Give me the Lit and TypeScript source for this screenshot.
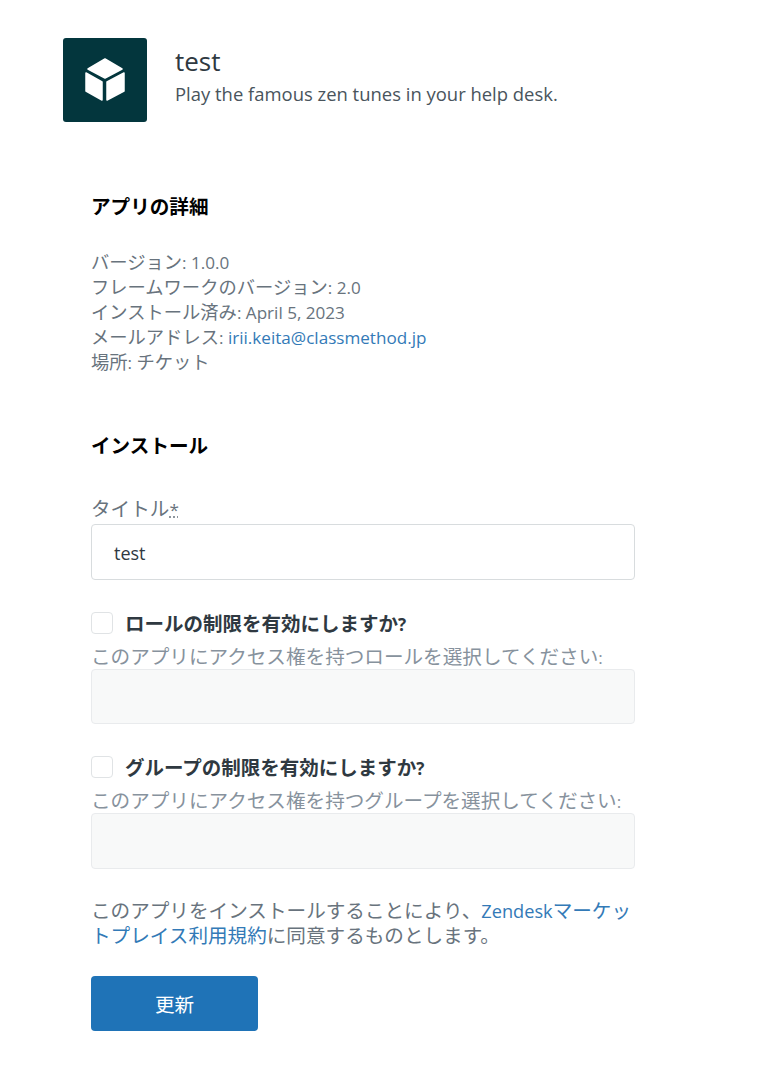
import { css, html, LitElement } from "lit";
import { customElement } from "lit/decorators.js";

@customElement("app-root")
export class AppRoot extends LitElement {
  static styles = css`
    :host {
      display: block;
      width: 768px;
      height: 1090px;
      background: #fff;
      color: #49545c;
      font-family: "Noto Sans CJK JP", "Open Sans", sans-serif;
      font-size: 19.6px;
      line-height: 25px;
      overflow: hidden;
    }
    a {
      color: #337ab7;
      text-decoration: none;
    }
    .lt {
      font-family: "Open Sans", sans-serif;
      font-size: 17.1px;
      line-height: 1;
    }
    .brand {
      font-size: 18.2px;
    }
    .header {
      display: flex;
      gap: 28px;
      padding: 38px 0 0 63px;
    }
    .icon {
      width: 84px;
      height: 84px;
      border-radius: 3px;
      background: #03363d;
      display: flex;
      align-items: center;
      justify-content: center;
    }
    .name {
      font-family: "Open Sans", sans-serif;
      font-size: 26px;
      line-height: 34px;
      margin-top: 6px;
      color: #2f3941;
    }
    .tagline {
      font-family: "Open Sans", sans-serif;
      font-size: 18.45px;
      line-height: 25px;
      margin-top: 3px;
    }
    .main {
      width: 544px;
      padding: 71px 0 0 91px;
    }
    h2 {
      margin: 0;
      font-size: 19.6px;
      line-height: 26px;
      font-weight: 700;
      color: #000;
    }
    .details {
      margin-top: 30px;
      font-size: 18.3px;
      color: #68737d;
    }
    .install {
      margin-top: 58px;
    }
    .label {
      margin-top: 37px;
      line-height: 26px;
      color: #68737d;
    }
    abbr {
      text-decoration: underline dotted;
    }
    .box {
      box-sizing: border-box;
      height: 56px;
      margin-top: 3px;
      border: 1px solid #d8dcde;
      border-radius: 4px;
      padding: 0 22px;
      line-height: 54px;
      color: #2f3941;
    }
    .box .lt {
      font-size: 18px;
    }
    .box.off {
      height: 55.5px;
      background: #f8f9f9;
      border-color: #e9ebed;
      margin-top: 0;
    }
    .check {
      display: flex;
      align-items: center;
      gap: 12px;
      margin-top: 29.5px;
      height: 26px;
      font-size: 19.5px;
      font-weight: 700;
      color: #2f3941;
    }
    .check i {
      box-sizing: border-box;
      width: 22px;
      height: 22px;
      border: 1px solid #e0e3e5;
      border-radius: 4px;
    }
    .hint {
      margin-top: 7.4px;
      height: 26px;
      line-height: 26px;
      color: #87929d;
    }
    .terms {
      margin-top: 28px;
      color: #68737d;
    }
    button {
      display: block;
      width: 167px;
      height: 55px;
      margin-top: 29px;
      border: 0;
      border-radius: 4px;
      background: #1f73b7;
      color: #fff;
      font: inherit;
    }
  `;

  renderRestriction(title: string, hint: string) {
    return html`<div class="check"><i></i><span>${title}<span class="lt">?</span></span></div>
      <div class="hint">${hint}<span class="lt">:</span></div>
      <div class="box off"></div>`;
  }

  render() {
    return html`
      <div class="header">
        <div class="icon">
          <svg width="42" height="46" viewBox="0 0 42 46" fill="#fff" stroke="#fff" stroke-width="1.5" stroke-linejoin="round">
            <path d="M21 2 38 12 21 21 4 12Z" />
            <path d="M2 16 18 25V43L2 34Z" />
            <path d="M40 16 23 25V43L40 34Z" />
          </svg>
        </div>
        <div>
          <div class="name">test</div>
          <div class="tagline">Play the famous zen tunes in your help desk.</div>
        </div>
      </div>
      <div class="main">
        <h2>アプリの詳細</h2>
        <div class="details">
          <div>バージョン<span class="lt">: 1.0.0</span></div>
          <div>フレームワークのバージョン<span class="lt">: 2.0</span></div>
          <div>インストール済み<span class="lt">: April 5, 2023</span></div>
          <div>メールアドレス<span class="lt">: </span><a class="lt" href="#">irii.keita@classmethod.jp</a></div>
          <div>場所<span class="lt">: </span>チケット</div>
        </div>
        <h2 class="install">インストール</h2>
        <div class="label">タイトル<abbr class="lt">*</abbr></div>
        <div class="box"><span class="lt">test</span></div>
        ${this.renderRestriction("ロールの制限を有効にしますか", "このアプリにアクセス権を持つロールを選択してください")}
        ${this.renderRestriction("グループの制限を有効にしますか", "このアプリにアクセス権を持つグループを選択してください")}
        <div class="terms">
          このアプリをインストールすることにより、<a href="#"><span class="lt brand">Zendesk</span>マーケットプレイス利用規約</a>に同意するものとします。
        </div>
        <button>更新</button>
      </div>
    `;
  }
}
